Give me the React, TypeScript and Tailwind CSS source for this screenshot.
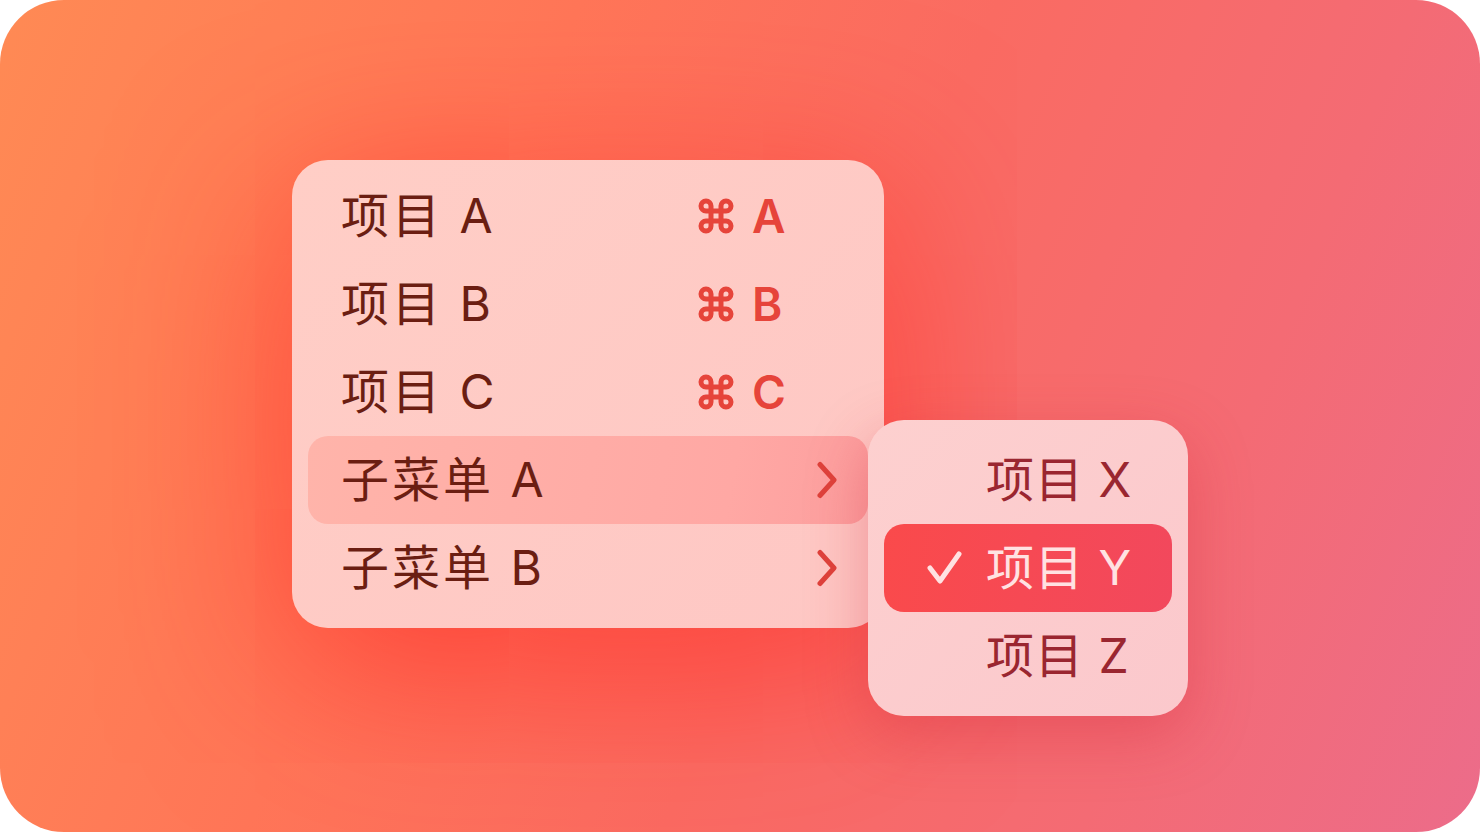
import React from "react";

const FONT = "font-['Inter','Noto_Sans_CJK_SC',sans-serif]";

function CommandGlyph() {
  return (
    <svg width="40" height="40" viewBox="0 0 24 24" fill="none" stroke="currentColor" strokeWidth="3" strokeLinecap="round" strokeLinejoin="round">
      <path d="M15 6v12a3 3 0 1 0 3-3H6a3 3 0 1 0 3 3V6a3 3 0 1 0-3 3h12a3 3 0 1 0-3-3" />
    </svg>
  );
}

function Chevron() {
  return (
    <svg width="22" height="38" viewBox="0 0 22 38" fill="none" stroke="currentColor" strokeWidth="5" strokeLinecap="round" strokeLinejoin="round">
      <path d="M4 3.5 L18 19 L4 34.5" />
    </svg>
  );
}

function Check() {
  return (
    <svg width="38" height="36" viewBox="0 0 38 36" fill="none" stroke="currentColor" strokeWidth="5" strokeLinecap="round" strokeLinejoin="round">
      <path d="M4 18 L14 31 L33 4" />
    </svg>
  );
}

type MainItem = { label: string; key?: string; sub?: boolean; active?: boolean };

const mainItems: MainItem[] = [
  { label: "项目 A", key: "A" },
  { label: "项目 B", key: "B" },
  { label: "项目 C", key: "C" },
  { label: "子菜单 A", sub: true, active: true },
  { label: "子菜单 B", sub: true },
];

const subItems = [
  { label: "项目 X" },
  { label: "项目 Y", checked: true },
  { label: "项目 Z" },
];

export default function App() {
  return (
    <div className={`w-[1480px] h-[832px] bg-white ${FONT}`}>
      <div className="w-full h-full rounded-[64px] overflow-hidden bg-[linear-gradient(112deg,#FF8A54_0%,#FF7658_32%,#FA6B62_55%,#F46B74_78%,#EC6C8A_100%)]">
        <div className="flex items-start pl-[292px] pt-[160px]">
          {/* main menu */}
          <div className="w-[592px] rounded-[36px] pt-[12px] pb-[16px] px-[16px] bg-[linear-gradient(135deg,#FFCEC6,#FEC7C4)] shadow-[0_40px_180px_rgba(255,45,40,0.75)]">
            {mainItems.map((it) => (
              <div
                key={it.label}
                className={`h-[88px] flex items-center pl-[33px] pr-[30px] rounded-[20px] ${
                  it.active ? "bg-[linear-gradient(100deg,#FFB4AA,#FFA8A4_75%,#FC9E9E)]" : ""
                }`}
              >
                <span className="text-[48px] leading-none text-[#6B1E12] tracking-[3px]">{it.label}</span>
                {it.key && (
                  <span className="ml-auto mr-[50px] w-[92px] flex items-center text-[#E6443A]">
                    <CommandGlyph />
                    <span className="ml-[16px] text-[46px] leading-none font-semibold">{it.key}</span>
                  </span>
                )}
                {it.sub && (
                  <span className="ml-auto text-[#DE423B] flex items-center">
                    <Chevron />
                  </span>
                )}
              </div>
            ))}
          </div>

          {/* submenu */}
          <div className="ml-[-16px] mt-[260px] w-[320px] rounded-[36px] py-[16px] px-[16px] bg-[linear-gradient(135deg,#FDD0CF,#FBC8CC)] shadow-[0_20px_60px_rgba(210,40,60,0.35)]">
            {subItems.map((it) => (
              <div
                key={it.label}
                className={`h-[88px] flex items-center pl-[42px] rounded-[20px] ${
                  it.checked ? "bg-[linear-gradient(100deg,#FA4A4B,#F2485D)] text-[#FFE2E2]" : "text-[#9A2630]"
                }`}
              >
                <span className="w-[60px] flex items-center">{it.checked && <Check />}</span>
                <span className="text-[48px] leading-none tracking-[1px]">{it.label}</span>
              </div>
            ))}
          </div>
        </div>
      </div>
    </div>
  );
}
